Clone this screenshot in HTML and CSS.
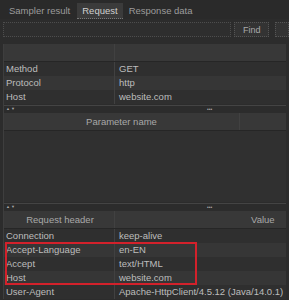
FILE: index.html
```html
<!DOCTYPE html>
<html lang="en">
<head>
    <meta charset="UTF-8">
    <title>Request</title>
    <link rel="stylesheet" href="styles.css">
</head>
<body>
    <div class="tabs">
        <span class="tab tab-first">Sampler result</span>
        <span class="tab active">Request</span>
        <span class="tab">Response data</span>
    </div>

    <div class="search">
        <div class="search-input"></div>
        <button class="btn">Find</button>
        <button class="btn btn-cut"></button>
    </div>

    <div class="panel">
        <!-- request line -->
        <div class="table">
            <div class="row head"><div class="cell key"></div><div class="cell val"></div></div>
            <div class="row"><div class="cell key">Method</div><div class="cell val">GET</div></div>
            <div class="row alt"><div class="cell key">Protocol</div><div class="cell val">http</div></div>
            <div class="row"><div class="cell key">Host</div><div class="cell val">website.com</div></div>
        </div>

        <div class="splitter"><span class="arrows">&#9650;&#9660;</span><span class="dots">&bull;&bull;&bull;</span></div>

        <!-- parameters -->
        <div class="row head params"><div class="cell pname">Parameter name</div><div class="cell pval"></div></div>
        <div class="empty"></div>

        <div class="splitter"><span class="arrows">&#9650;&#9660;</span><span class="dots">&bull;&bull;&bull;</span></div>

        <!-- headers -->
        <div class="table">
            <div class="row head"><div class="cell key">Request header</div><div class="cell val value-head">Value</div></div>
            <div class="row"><div class="cell key">Connection</div><div class="cell val">keep-alive</div></div>
            <div class="marked">
                <div class="row alt"><div class="cell key">Accept-Language</div><div class="cell val">en-EN</div></div>
                <div class="row"><div class="cell key">Accept</div><div class="cell val">text/HTML</div></div>
                <div class="row alt"><div class="cell key">Host</div><div class="cell val">website.com</div></div>
            </div>
            <div class="row"><div class="cell key">User-Agent</div><div class="cell val">Apache-HttpClient/4.5.12 (Java/14.0.1)</div></div>
        </div>
    </div>
</body>
</html>
```

FILE: styles.css
```css
* {
    margin: 0;
    padding: 0;
    box-sizing: border-box;
}

body {
    width: 289px;
    height: 300px;
    overflow: hidden;
    background: #2c2c2c;
    color: #bdbdbd;
    font-family: 'Liberation Sans', Arial, sans-serif;
    font-size: 9.5px;
}

.tabs {
    display: flex;
    height: 19px;
    padding: 3px 0 0 3px;
    background: #2a2a2a;
}

.tab {
    padding: 2px 6px 0 6px;
    color: #9c9c9c;
    white-space: nowrap;
}

.tab-first {
    padding-right: 7px;
}

.tab.active {
    padding: 2px 5px 0 5px;
    background: #3b3b3b;
    color: #d0d0d0;
    border-bottom: 1px dotted #777;
}

.search {
    display: flex;
    gap: 3px;
    height: 15px;
    margin: 3px 0 0 3px;
}

.search-input {
    width: 234px;
    border: 1px dotted #4d4d4d;
    background: #2e2e2e;
}

.btn {
    width: 36px;
    border: 1px dotted #555;
    background: #333;
    color: #a9a9a9;
    font: inherit;
    font-size: 9px;
}

.btn-cut {
    width: 14px;
    margin-left: 3px;
}

.panel {
    margin: 7px 3px 0 3px;
    width: 283px;
    border-left: 1px solid #3e3e3e;
}

.row {
    display: flex;
    height: 14px;
    line-height: 14px;
    background: #2f2f2f;
}

.row.alt {
    background: #363636;
}

.row.head {
    height: 18px;
    line-height: 17px;
    background: #383838;
    color: #a8a8a8;
    border-bottom: 1px solid #262626;
}

.cell {
    white-space: nowrap;
    overflow: hidden;
}

.key {
    width: 111px;
    padding-left: 2px;
    border-right: 1px solid #414141;
}

.val {
    flex: 1;
    padding-left: 4px;
}

.head .key {
    text-align: center;
}

.value-head {
    padding-left: 136px;
}

.splitter {
    position: relative;
    height: 8px;
    border-top: 1px solid #444;
    margin-top: 1px;
    background: #2c2c2c;
}

.arrows {
    position: absolute;
    left: 2px;
    top: 0;
    font-size: 4px;
    line-height: 6px;
    color: #aaa;
    letter-spacing: 1px;
}

.dots {
    position: absolute;
    left: 203px;
    top: 0;
    font-size: 5px;
    line-height: 6px;
    color: #aaa;
}

.pname {
    width: 236px;
    text-align: center;
    border-right: 1px solid #414141;
}

.pval {
    flex: 1;
}

.empty {
    height: 71px;
    background: #303030;
}

.marked {
    position: relative;
}

.marked::after {
    content: '';
    position: absolute;
    left: 1px;
    top: -1px;
    width: 188px;
    bottom: 0;
    border: 2px solid #d3212b;
}
```
